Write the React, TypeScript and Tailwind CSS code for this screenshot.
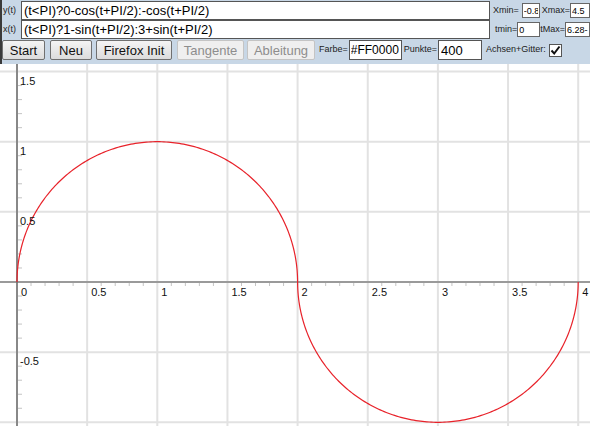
import React from "react";

const X0 = 17;
const Y0 = 282;
const S = 140.3;

const px = (x: number) => X0 + x * S;
const py = (y: number) => Y0 - y * S;

function curvePath() {
  const n = 400;
  const pts: string[] = [];
  for (let i = 0; i <= n; i++) {
    const t = (i / n) * 2 * Math.PI;
    const x = t < Math.PI ? 1 - Math.sin(t + Math.PI / 2) : 3 + Math.sin(t + Math.PI / 2);
    const y = t < Math.PI ? 0 - Math.cos(t + Math.PI / 2) : -Math.cos(t + Math.PI / 2);
    pts.push(`${i === 0 ? "M" : "L"}${px(x).toFixed(2)},${py(y).toFixed(2)}`);
  }
  return pts.join(" ");
}

const xLabels = ["0", "0.5", "1", "1.5", "2", "2.5", "3", "3.5", "4"];
const yLabels: [number, string][] = [
  [1.5, "1.5"],
  [1, "1"],
  [0.5, "0.5"],
  [-0.5, "-0.5"],
];

function Btn({ label, disabled, className }: { label: string; disabled?: boolean; className: string }) {
  return (
    <button
      className={
        (disabled
          ? "h-[20px] border border-[#c4c4c4] bg-[#efefef] text-[#8d8d8d] "
          : "h-[20px] border border-[#707070] bg-gradient-to-b from-[#f4f4f4] to-[#dcdcdc] text-[#111] ") +
        "text-[13px] rounded-[2px] leading-none whitespace-nowrap shrink-0 px-0 " +
        className
      }
    >
      {label}
    </button>
  );
}

export default function App() {
  const ticksX: number[] = [];
  for (let i = 1; i <= 40; i++) if (i % 5 !== 0) ticksX.push(px(i / 10));
  const ticksY: number[] = [];
  for (let i = -10; i <= 15; i++) if (i % 5 !== 0) ticksY.push(py(i / 10));

  return (
    <div className="w-[590px] h-[426px] overflow-hidden bg-white font-['Liberation_Sans',Arial,sans-serif]">
      {/* control panel */}
      <div className="h-[64px] bg-[#c8d7e6] border-l-2 border-[#3a3a3a] flex flex-col pt-[1px]">
        <div className="flex items-center h-[19px]">
          <span className="w-[19px] text-[9px] text-[#222] pl-[1px]">y(t)</span>
          <input
            readOnly
            value="(t<PI)?0-cos(t+PI/2):-cos(t+PI/2)"
            className="w-[471px] h-[19px] border border-[#555] bg-white px-[2px] text-[13px] text-black outline-none"
          />
          <span className="text-[9px] text-[#222] ml-[3px] mr-[3px]">Xmin=</span>
          <input readOnly value="-0.8" className="w-[18px] h-[15px] border border-[#666] bg-white text-[9px] px-[1px] outline-none" />
          <span className="text-[9px] text-[#222] ml-[2px]">Xmax=</span>
          <input readOnly value="4.5" className="w-[20px] h-[15px] border border-[#666] bg-white text-[9px] px-[1px] outline-none" />
        </div>
        <div className="flex items-center h-[19px]">
          <span className="w-[19px] text-[9px] text-[#222] pl-[1px]">x(t)</span>
          <input
            readOnly
            value="(t<PI)?1-sin(t+PI/2):3+sin(t+PI/2)"
            className="w-[471px] h-[19px] border border-[#555] bg-white px-[2px] text-[13px] text-black outline-none"
          />
          <span className="text-[9px] text-[#222] ml-[5px]">tmin=</span>
          <input readOnly value="0" className="w-[23px] h-[15px] border border-[#666] bg-white text-[9px] px-[1px] outline-none" />
          <span className="text-[9px] text-[#222]">tMax=</span>
          <input readOnly value="6.28-" className="w-[25px] h-[15px] border border-[#666] bg-white text-[9px] px-[1px] outline-none" />
        </div>
        <div className="flex items-center h-[22px] pl-[0px]">
          <Btn label="Start" className="w-[43px]" />
          <Btn label="Neu" className="w-[42px] ml-[5px]" />
          <Btn label="Firefox Init" className="w-[76px] ml-[4px]" />
          <Btn label="Tangente" disabled className="w-[67px] ml-[5px]" />
          <Btn label="Ableitung" disabled className="w-[68px] ml-[3px]" />
          <span className="text-[9px] text-[#222] ml-[4px] whitespace-nowrap">Farbe=</span>
          <input readOnly value="#FF0000" className="ml-[1px] w-[53px] h-[20px] border border-[#555] bg-white text-[12px] px-[1px] outline-none" />
          <span className="text-[9px] text-[#222] ml-[2px] whitespace-nowrap">Punkte=</span>
          <input readOnly value="400" className="ml-[1px] w-[44px] h-[20px] border border-[#555] bg-white text-[13px] px-[2px] outline-none" />
          <span className="text-[9px] text-[#222] ml-[4px] whitespace-nowrap">Achsen+Gitter:</span>
          <span className="ml-[3px] w-[13px] h-[13px] border border-[#555] bg-white flex items-center justify-center shrink-0">
            <svg width="11" height="11" viewBox="0 0 11 11">
              <path d="M1.5 5.5 L4.2 8.5 L9.5 1.5" fill="none" stroke="#111" strokeWidth="2" />
            </svg>
          </span>
        </div>
      </div>

      {/* plot */}
      <svg width="590" height="362" viewBox="0 64 590 362" className="block">
        {xLabels.map((_, i) => (
          <line key={"gx" + i} x1={px(i / 2)} y1={64} x2={px(i / 2)} y2={426} stroke="#e2e2e2" strokeWidth="2" />
        ))}
        {[1.5, 1, 0.5, -0.5, -1].map((v) => (
          <line key={"gy" + v} x1={0} y1={py(v)} x2={590} y2={py(v)} stroke="#e2e2e2" strokeWidth="2" />
        ))}
        {ticksX.map((x, i) => (
          <line key={"tx" + i} x1={x} y1={283} x2={x} y2={286} stroke="#c4c4c4" strokeWidth="1" />
        ))}
        {ticksY.map((y, i) => (
          <line key={"ty" + i} x1={18} y1={y} x2={22} y2={y} stroke="#c4c4c4" strokeWidth="1" />
        ))}
        <line x1={0} y1={Y0} x2={590} y2={Y0} stroke="#9a9a9a" strokeWidth="2" />
        <line x1={X0} y1={64} x2={X0} y2={426} stroke="#6a6a6a" strokeWidth="1.5" />
        <path d={curvePath()} fill="none" stroke="#e8222a" strokeWidth="1.2" />
        {xLabels.map((l, i) => (
          <text key={"lx" + i} x={px(i / 2) + 4} y={296} fontSize="11" fill="#111" fontFamily="Liberation Sans, Arial, sans-serif">
            {l}
          </text>
        ))}
        {yLabels.map(([v, l]) => (
          <text key={"ly" + l} x={20} y={py(v) + 13} fontSize="11" fill="#111" fontFamily="Liberation Sans, Arial, sans-serif">
            {l}
          </text>
        ))}
      </svg>
    </div>
  );
}
